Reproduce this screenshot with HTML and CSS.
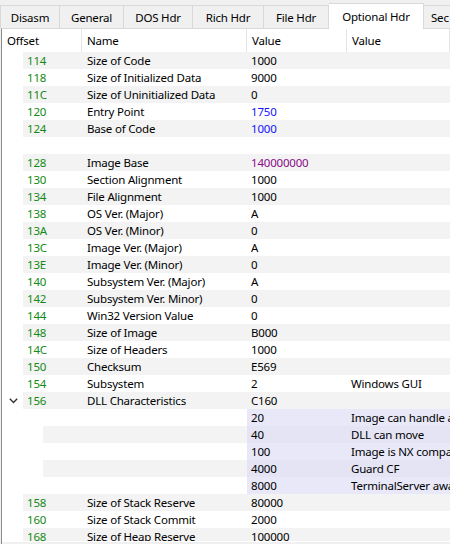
FILE: index.html
```html
<!DOCTYPE html>
<html lang="en">
<head>
  <meta charset="UTF-8">
  <title>Optional Hdr</title>
  <link rel="stylesheet" href="styles.css">
</head>
<body>

  <!-- Abas do topo -->
  <div class="tabs">
    <div class="tab t-disasm">Disasm</div>
    <div class="tab t-general">General</div>
    <div class="tab t-dos">DOS Hdr</div>
    <div class="tab t-rich">Rich Hdr</div>
    <div class="tab t-file">File Hdr</div>
    <div class="tab t-opt ativa">Optional Hdr</div>
    <div class="tab t-sec">Sec</div>
  </div>

  <!-- Painel com a arvore de campos -->
  <div class="painel">
    <div class="cabecalho">
      <div class="col c-off">Offset</div>
      <div class="col c-name">Name</div>
      <div class="col c-val">Value</div>
      <div class="col c-desc">Value</div>
    </div>

    <div class="linha par"><div class="c-off off">114</div><div class="c-name">Size of Code</div><div class="c-val">1000</div><div class="c-desc"></div></div>
    <div class="linha"><div class="c-off off">118</div><div class="c-name">Size of Initialized Data</div><div class="c-val">9000</div><div class="c-desc"></div></div>
    <div class="linha par"><div class="c-off off">11C</div><div class="c-name">Size of Uninitialized Data</div><div class="c-val">0</div><div class="c-desc"></div></div>
    <div class="linha"><div class="c-off off">120</div><div class="c-name">Entry Point</div><div class="c-val azul">1750</div><div class="c-desc"></div></div>
    <div class="linha par"><div class="c-off off">124</div><div class="c-name">Base of Code</div><div class="c-val azul">1000</div><div class="c-desc"></div></div>
    <div class="linha"><div class="c-off off"></div><div class="c-name"></div><div class="c-val"></div><div class="c-desc"></div></div>
    <div class="linha par"><div class="c-off off">128</div><div class="c-name">Image Base</div><div class="c-val roxo">140000000</div><div class="c-desc"></div></div>
    <div class="linha"><div class="c-off off">130</div><div class="c-name">Section Alignment</div><div class="c-val">1000</div><div class="c-desc"></div></div>
    <div class="linha par"><div class="c-off off">134</div><div class="c-name">File Alignment</div><div class="c-val">1000</div><div class="c-desc"></div></div>
    <div class="linha"><div class="c-off off">138</div><div class="c-name">OS Ver. (Major)</div><div class="c-val">A</div><div class="c-desc"></div></div>
    <div class="linha par"><div class="c-off off">13A</div><div class="c-name">OS Ver. (Minor)</div><div class="c-val">0</div><div class="c-desc"></div></div>
    <div class="linha"><div class="c-off off">13C</div><div class="c-name">Image Ver. (Major)</div><div class="c-val">A</div><div class="c-desc"></div></div>
    <div class="linha par"><div class="c-off off">13E</div><div class="c-name">Image Ver. (Minor)</div><div class="c-val">0</div><div class="c-desc"></div></div>
    <div class="linha"><div class="c-off off">140</div><div class="c-name">Subsystem Ver. (Major)</div><div class="c-val">A</div><div class="c-desc"></div></div>
    <div class="linha par"><div class="c-off off">142</div><div class="c-name">Subsystem Ver. Minor)</div><div class="c-val">0</div><div class="c-desc"></div></div>
    <div class="linha"><div class="c-off off">144</div><div class="c-name">Win32 Version Value</div><div class="c-val">0</div><div class="c-desc"></div></div>
    <div class="linha par"><div class="c-off off">148</div><div class="c-name">Size of Image</div><div class="c-val">B000</div><div class="c-desc"></div></div>
    <div class="linha"><div class="c-off off">14C</div><div class="c-name">Size of Headers</div><div class="c-val">1000</div><div class="c-desc"></div></div>
    <div class="linha par"><div class="c-off off">150</div><div class="c-name">Checksum</div><div class="c-val">E569</div><div class="c-desc"></div></div>
    <div class="linha"><div class="c-off off">154</div><div class="c-name">Subsystem</div><div class="c-val">2</div><div class="c-desc">Windows GUI</div></div>
    <div class="linha par">
      <span class="seta"><svg width="9" height="6" viewBox="0 0 9 6"><path d="M0.8 0.8 L4.5 4.5 L8.2 0.8" fill="none" stroke="#333" stroke-width="1.4"/></svg></span>
      <div class="c-off off">156</div><div class="c-name">DLL Characteristics</div><div class="c-val">C160</div><div class="c-desc"></div>
    </div>

    <!-- Flags filhas do DLL Characteristics (cortadas na borda como no original) -->
    <div class="linha filho"><div class="c-off"></div><div class="c-name"></div><div class="c-val">20</div><div class="c-desc">Image can handle a</div></div>
    <div class="linha filho par"><div class="c-off"></div><div class="c-name"></div><div class="c-val">40</div><div class="c-desc">DLL can move</div></div>
    <div class="linha filho"><div class="c-off"></div><div class="c-name"></div><div class="c-val">100</div><div class="c-desc">Image is NX compa</div></div>
    <div class="linha filho par"><div class="c-off"></div><div class="c-name"></div><div class="c-val">4000</div><div class="c-desc">Guard CF</div></div>
    <div class="linha filho"><div class="c-off"></div><div class="c-name"></div><div class="c-val">8000</div><div class="c-desc">TerminalServer awa</div></div>

    <div class="linha par"><div class="c-off off">158</div><div class="c-name">Size of Stack Reserve</div><div class="c-val">80000</div><div class="c-desc"></div></div>
    <div class="linha"><div class="c-off off">160</div><div class="c-name">Size of Stack Commit</div><div class="c-val">2000</div><div class="c-desc"></div></div>
    <div class="linha par ultima"><div class="c-off off">168</div><div class="c-name">Size of Heap Reserve</div><div class="c-val">100000</div><div class="c-desc"></div></div>

    <!-- Inicio da barra de rolagem horizontal -->
    <div class="rolagem"></div>
  </div>

</body>
</html>
```

FILE: styles.css
```css
body {
  font-family: "Noto Sans", "Open Sans", sans-serif;
  font-size: 11.5px;
  letter-spacing: -0.2px;
  background-color: #f0f0f0;
  color: #000;
  margin: 0;
  width: 450px;
  height: 544px;
  overflow: hidden;
}

/* Abas */
.tabs {
  display: flex;
  height: 28px;
  align-items: flex-end;
  white-space: nowrap;
}

.tab {
  height: 23px;
  line-height: 23px;
  border: 1px solid #d9d9d9;
  border-bottom: none;
  border-left: none;
  background-color: #f0f0f0;
  box-sizing: border-box;
  text-align: center;
  flex: none;
}

.t-disasm { width: 60px; border-left: 1px solid #d9d9d9; }
.t-general { width: 64px; }
.t-dos { width: 69px; }
.t-rich { width: 71px; }
.t-file { width: 65px; }
.t-opt { width: 95px; }
.t-sec { width: 40px; text-align: left; padding-left: 7px; }

/* Aba selecionada, mais alta e branca */
.tab.ativa {
  background-color: #fff;
  height: 26px;
  line-height: 25px;
  margin-bottom: -1px;
  position: relative;
  z-index: 1;
}

/* Painel principal */
.painel {
  background-color: #fff;
  border-top: 1px solid #d9d9d9;
  border-left: 1px solid #8c8c8c;
  margin-left: 1px;
  height: 515px;
  overflow: hidden;
}

.cabecalho,
.linha {
  display: grid;
  grid-template-columns: 80px 165px 100px 1fr;
  white-space: nowrap;
}

.cabecalho {
  height: 23px;
  line-height: 24px;
}

.cabecalho .col {
  padding-left: 5px;
  border-right: 1px solid #e5e5e5;
  overflow: hidden;
}

.linha {
  height: 17px;
  line-height: 18px;
  position: relative;
  margin-left: 21px;
  grid-template-columns: 59px 165px 100px 1fr;
}

.linha > div {
  padding-left: 4px;
  overflow: hidden;
}

.linha .c-name { padding-left: 5px; }

.linha.par { background-color: #f3f3f3; }

.off { color: #138a13; }
.azul { color: #1414ff; }
.roxo { color: #8a0a8a; }

/* Linhas filhas com recuo maior */
.filho {
  margin-left: 41px;
  grid-template-columns: 39px 165px 100px 1fr;
}

.filho .c-val,
.filho .c-desc {
  background-color: #e8e8f8;
}

.filho.par .c-val,
.filho.par .c-desc {
  background-color: #e4e4f4;
}

/* Seta de expandir */
.seta {
  position: absolute;
  left: -14px;
  top: 6px;
  line-height: 0;
}

.ultima { height: 13px; }

.rolagem {
  border-top: 1px solid #fff;
  background-color: #f0f0f0;
  height: 10px;
}
```
